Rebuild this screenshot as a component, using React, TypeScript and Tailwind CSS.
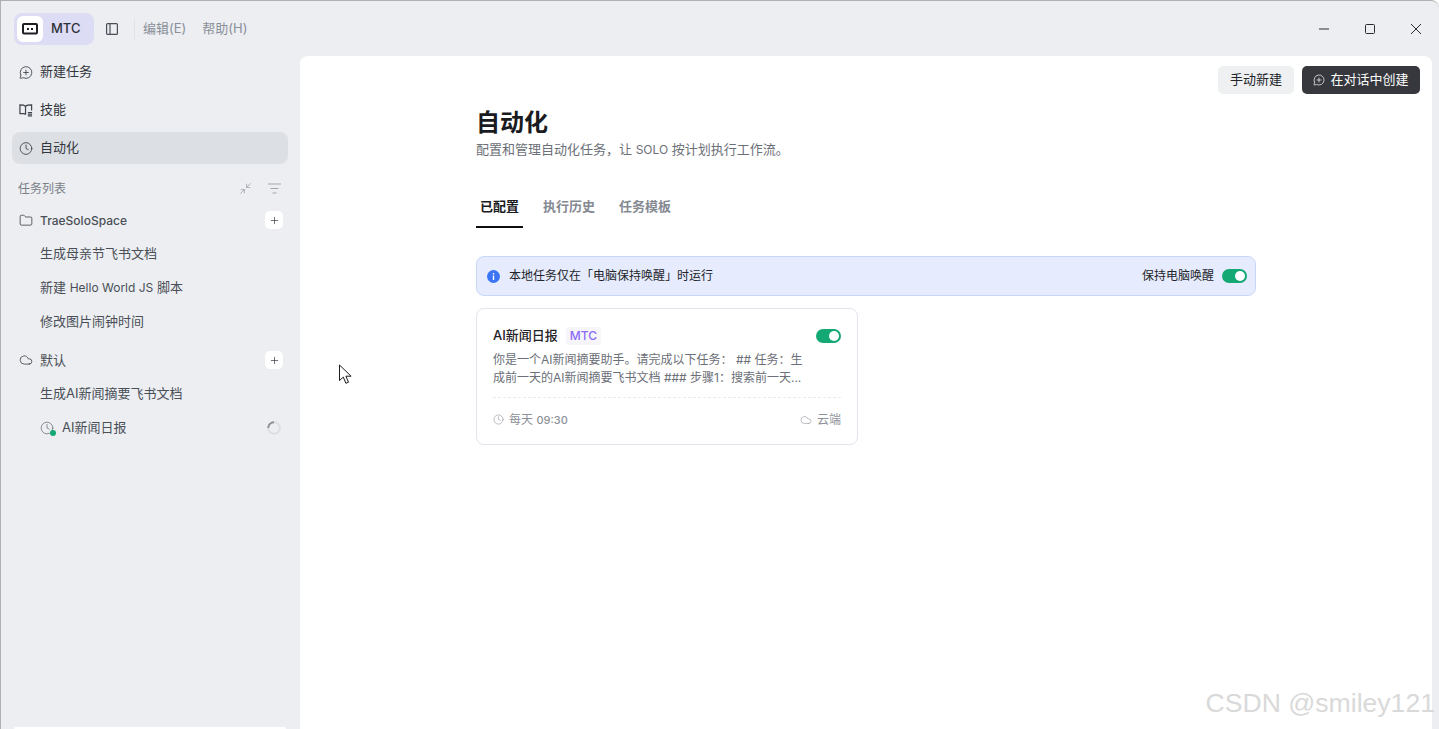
import React from 'react';
import { Clock, Cloud, Folder, MessageCirclePlus, Minimize2, Plus } from 'lucide-react';

const FONT = "font-['Inter','Noto_Sans_CJK_SC',sans-serif]";

function Toggle() {
  return (
    <span className="flex h-[14px] w-[25px] shrink-0 items-center justify-end rounded-full bg-[#14a874] pr-[2px]">
      <span className="h-[10px] w-[10px] rounded-full bg-white" />
    </span>
  );
}

function SkillIcon() {
  return (
    <svg width="16" height="15" viewBox="0 0 15 14" fill="none" stroke="#3f434b" strokeWidth="1.3">
      <path d="M7 2.4C6 1.5 4.6 1 1 1v9.4h4.2c.9 0 1.8.4 1.8 1.2V2.4Zm0 0C8 1.5 9.4 1 13.5 1v6" />
      <path d="M9.5 9.2h4.5M9.5 11h4.5M9.5 12.8h4.5" />
    </svg>
  );
}

function NavItem({ icon, label, active }: { icon: React.ReactNode; label: string; active?: boolean }) {
  return (
    <div className={`flex h-8 items-center gap-[7px] rounded-lg px-[7px] text-[13px] text-[#33373e] ${active ? 'bg-[#dcdfe3]' : ''}`}>
      <span className="flex w-[14px] justify-center">{icon}</span>
      {label}
    </div>
  );
}

function AddButton() {
  return (
    <span className="flex h-[18px] w-[18px] items-center justify-center rounded-[5px] bg-white">
      <Plus size={11} strokeWidth={1.6} color="#3f434b" />
    </span>
  );
}

function GroupRow({ icon, label, latin }: { icon: React.ReactNode; label: string; latin?: boolean }) {
  return (
    <div className="flex h-[34px] items-center gap-[7px] pl-[7px] pr-[5px] text-[13px] text-[#4a4e56]">
      <span className="flex w-[14px] justify-center">{icon}</span>
      <span className={`flex-1 pt-px ${latin ? 'text-[12px] font-medium' : ''}`}>{label}</span>
      <AddButton />
    </div>
  );
}

function TaskRow({ children }: { children: React.ReactNode }) {
  return <div className="flex h-[34px] items-center whitespace-pre pl-[28px] text-[13px] text-[#4a4e56]">{children}</div>;
}

function Sidebar() {
  return (
    <aside className="relative mr-3 flex w-[276px] shrink-0 flex-col">
      <div className="flex flex-col gap-[6px]">
        <NavItem icon={<MessageCirclePlus size={15} strokeWidth={1.5} color="#3f434b" />} label="新建任务" />
        <NavItem icon={<SkillIcon />} label="技能" />
        <NavItem icon={<Clock size={15} strokeWidth={1.5} color="#3f434b" />} label="自动化" active />
      </div>
      <div className="mt-[14px] flex h-5 items-center justify-between pl-[6px] pr-[7px] pt-px text-[12px] text-[#7a7f88]">
        任务列表
        <span className="flex items-center gap-[16px]">
          <Minimize2 size={13} strokeWidth={1.2} color="#8f949c" />
          <svg width="13" height="11" viewBox="0 0 13 11" fill="none" stroke="#a3a7ae" strokeWidth="1">
            <path d="M0 1h13M2.5 5.5h8M4.5 10h4" />
          </svg>
        </span>
      </div>
      <div className="mt-[5px] flex flex-col">
        <GroupRow icon={<Folder size={15} strokeWidth={1.4} color="#3f434b" />} label="TraeSoloSpace" latin />
        <TaskRow>生成母亲节飞书文档</TaskRow>
        <TaskRow>新建 <span className="text-[12px]">Hello World JS</span> 脚本</TaskRow>
        <TaskRow>修改图片闹钟时间</TaskRow>
        <div className="mt-1">
          <GroupRow icon={<Cloud size={16} strokeWidth={1.4} color="#3f434b" />} label="默认" />
        </div>
        <TaskRow>生成AI新闻摘要飞书文档</TaskRow>
        <div className="flex h-[34px] items-center pl-[28px] pr-[7px] text-[13px] text-[#4a4e56]">
          <span className="relative mr-[6px] flex h-4 w-4 items-center">
            <Clock size={14} strokeWidth={1.3} color="#6a6f78" />
            <span className="absolute bottom-0 right-0 h-[6px] w-[6px] rounded-full bg-[#14a874]" />
          </span>
          <span className="flex-1">AI新闻日报</span>
          <svg width="14" height="14" viewBox="0 0 14 14" fill="none" strokeWidth="2">
            <circle cx="7" cy="7" r="5.8" stroke="#dcdee2" />
            <path d="M7 1.2A5.8 5.8 0 0 0 1.2 7" stroke="#8d9198" />
          </svg>
        </div>
      </div>
      <div className="absolute bottom-0 left-[2px] right-[2px] h-[2px] rounded-t-lg bg-white" />
    </aside>
  );
}

function TitleBar() {
  return (
    <header className="flex h-[55px] shrink-0 items-center pl-[13px]">
      <div className="flex h-8 w-20 items-center gap-2 rounded-lg bg-[#dcdcf4] pl-[3px] text-[13px] font-medium text-[#2e3138]">
        <span className="flex h-[26px] w-[26px] items-center justify-center rounded-md bg-white">
          <svg width="16" height="12" viewBox="0 0 16 12">
            <rect x="1" y="1" width="14" height="9.5" rx="1" fill="none" stroke="#1d1f24" strokeWidth="2" />
            <rect x="5" y="5" width="2" height="2" fill="#1d1f24" />
            <rect x="9" y="5" width="2" height="2" fill="#1d1f24" />
          </svg>
        </span>
        MTC
      </div>
      <svg className="ml-3" width="12" height="12" viewBox="0 0 12 12" fill="none" stroke="#4a4e56" strokeWidth="1.2">
        <rect x="0.6" y="0.6" width="10.8" height="10.8" rx="1" />
        <path d="M4 0.6v10.8" />
      </svg>
      <span className="ml-4 h-5 w-px bg-[#dfe1e5]" />
      <span className="ml-2 pt-px text-[13px] text-[#8a8f98]">编辑(E)</span>
      <span className="ml-4 pt-px text-[13px] text-[#8a8f98]">帮助(H)</span>
      <div className="ml-auto flex items-center gap-[36px] pr-[18px]">
        <svg width="10" height="10" viewBox="0 0 10 10" stroke="#2b2b2b" strokeWidth="1"><path d="M0 5h10" /></svg>
        <svg width="10" height="10" viewBox="0 0 10 10" fill="none" stroke="#2b2b2b" strokeWidth="1"><rect x="0.5" y="0.5" width="9" height="9" rx="1" /></svg>
        <svg width="10" height="10" viewBox="0 0 10 10" stroke="#2b2b2b" strokeWidth="1"><path d="M0 0l10 10M10 0L0 10" /></svg>
      </div>
    </header>
  );
}

function TaskCard() {
  return (
    <div className="mt-3 w-[382px] rounded-lg border border-[#e2e5ec] bg-white px-4 pb-[15px] pt-[17px]">
      <div className="flex items-center">
        <span className="text-[13px] font-medium text-[#1f2126]">AI新闻日报</span>
        <span className="ml-2 flex h-[18px] items-center rounded-[3px] bg-[#f5f5fa] px-[4px] text-[12px] font-medium text-[#8b6cf6]">MTC</span>
        <span className="ml-auto"><Toggle /></span>
      </div>
      <p className="mt-[5px] w-[312px] text-[12px] leading-[18px] text-[#6b6f77]">
        你是一个AI新闻摘要助手。请完成以下任务： ## 任务：生成前一天的AI新闻摘要飞书文档 ### 步骤1：搜索前一天...
      </p>
      <div className="mt-[10px] border-t border-dashed border-[#e8eaee]" />
      <div className="mt-[13px] flex items-center justify-between text-[12px] text-[#8d9199]">
        <span className="flex items-center gap-[5px]">
          <Clock size={11} strokeWidth={1.3} color="#8d9199" />
          <span>每天 <span className="text-[11px] font-medium">09:30</span></span>
        </span>
        <span className="flex items-center gap-[5px]">
          <Cloud size={12} strokeWidth={1.3} color="#9a9ea6" />
          云端
        </span>
      </div>
    </div>
  );
}

function MainPanel() {
  return (
    <main className="relative flex min-w-0 flex-1 flex-col rounded-t-lg bg-white">
      <div className="flex justify-end gap-2 pr-3 pt-[10px]">
        <button className="h-7 w-[76px] rounded-[5px] bg-[#eef0f2] text-[13px] text-[#23252a]">手动新建</button>
        <button className="flex h-7 w-[118px] items-center justify-center gap-[5px] rounded-[5px] bg-[#36383d] text-[13px] text-white">
          <MessageCirclePlus size={12} strokeWidth={1.4} color="#ffffff" />
          在对话中创建
        </button>
      </div>
      <div className="mx-auto w-[780px] pt-[13px]">
        <h1 className="text-[24px] font-bold leading-[32px] text-[#1a1b1e]">自动化</h1>
        <p className="text-[13px] leading-[20px] text-[#6b6f77]">配置和管理自动化任务，让 <span className="text-[12px]">SOLO</span> 按计划执行工作流。</p>
        <div className="mt-[28px] flex h-[40px] gap-4 text-[13px] font-semibold text-[#858a92]">
          <span className="border-b-2 border-[#0d0e10] px-1 pt-[9px] leading-[18px] text-[#1a1b1e]">已配置</span>
          <span className="px-1 pt-[9px] leading-[18px]">执行历史</span>
          <span className="px-1 pt-[9px] leading-[18px]">任务模板</span>
        </div>
        <div className="mt-7 flex h-10 items-center rounded-lg border border-[#c9d8f8] bg-[#e6ecfd] pl-[10px] pr-[8px] text-[12px] text-[#23252a]">
          <svg width="13" height="13" viewBox="0 0 13 13">
            <circle cx="6.5" cy="6.5" r="6.5" fill="#3b74f5" />
            <rect x="5.8" y="5.5" width="1.4" height="4.5" fill="#fff" />
            <rect x="5.8" y="3" width="1.4" height="1.5" fill="#fff" />
          </svg>
          <span className="ml-[9px] flex-1">本地任务仅在「电脑保持唤醒」时运行</span>
          <span className="mr-2">保持电脑唤醒</span>
          <Toggle />
        </div>
        <TaskCard />
      </div>
      <div className="absolute bottom-[12px] right-[-3px] font-['Liberation_Sans',sans-serif] text-[26.6px] leading-none text-[#d9d9d9]">CSDN @smiley121</div>
      <svg className="absolute left-[38px] top-[308px]" width="14" height="21" viewBox="0 0 14 21" fill="#fff" stroke="#1c1c1c" strokeWidth="1">
        <path d="M1.5 1v15.5l3.8-3.4 2.6 6.2 2.6-1.1-2.6-6h5.2z" />
      </svg>
    </main>
  );
}

export default function App() {
  return (
    <div className={`flex h-screen w-full flex-col overflow-hidden rounded-tr-lg border-l border-t border-[#aeb0b2] bg-[#eceef2] ${FONT}`}>
      <TitleBar />
      <div className="flex min-h-0 flex-1 pl-[11px] pr-[7px]">
        <Sidebar />
        <MainPanel />
      </div>
    </div>
  );
}
